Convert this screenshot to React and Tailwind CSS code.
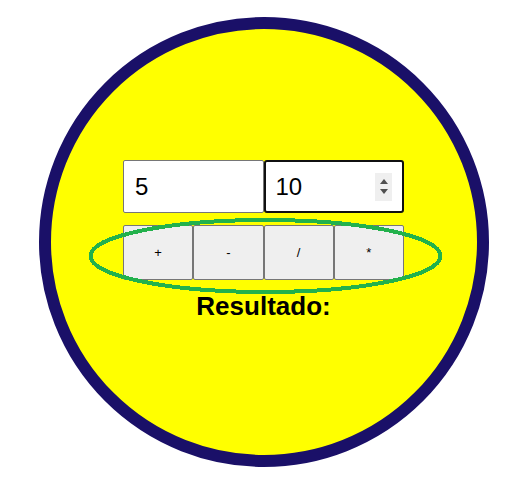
import React from 'react';

function Spinner() {
  return (
    <div className="flex h-[28px] w-[17px] flex-col items-center justify-center gap-[5px] bg-[#efefef]">
      <svg width="8" height="5" viewBox="0 0 8 5">
        <polygon points="4,0 8,5 0,5" fill="#505050" />
      </svg>
      <svg width="8" height="5" viewBox="0 0 8 5">
        <polygon points="0,0 8,0 4,5" fill="#505050" />
      </svg>
    </div>
  );
}

export default function App() {
  const ops = ['+', '-', '/', '*'];

  return (
    <div className="relative min-h-[489px] w-full bg-white pt-[17px]" style={{ fontFamily: '"Liberation Sans", Arial, sans-serif' }}>
      <div className="mx-auto flex h-[450px] w-[450px] flex-col items-center rounded-full border-[12px] border-[#1a1068] bg-[#ffff00] pt-[131px]">
        {/* inputs */}
        <div className="flex w-[281px]">
          <input
            type="text"
            readOnly
            value="5"
            className="h-[53px] w-1/2 rounded-[2px] border border-[#767676] bg-white pl-[11px] text-[24px] text-black outline-none"
          />
          <div className="flex h-[53px] w-1/2 items-center rounded-[3px] border-2 border-[#101010] bg-white pr-[10px]">
            <input
              type="text"
              readOnly
              value="10"
              className="h-full min-w-0 flex-1 bg-transparent pl-[10px] text-[24px] text-black outline-none"
            />
            <Spinner />
          </div>
        </div>

        {/* operation buttons */}
        <div className="mt-[12px] flex w-[281px]">
          {ops.map((op) => (
            <button
              key={op}
              className="h-[55px] w-1/4 rounded-[2px] border border-[#767676] bg-[#efefef] text-[13px] text-black"
            >
              {op}
            </button>
          ))}
        </div>

        <h2 className="mt-[11px] text-[26px] font-bold leading-[30px] text-black">Resultado:</h2>
      </div>

      {/* green ellipse annotation drawn over the buttons */}
      <svg className="pointer-events-none absolute left-[86px] top-[216px]" width="360" height="80" viewBox="0 0 360 80">
        <ellipse cx="179.5" cy="40" rx="175" ry="36" fill="none" stroke="#22b14c" strokeWidth="4" shapeRendering="crispEdges" />
      </svg>
    </div>
  );
}
